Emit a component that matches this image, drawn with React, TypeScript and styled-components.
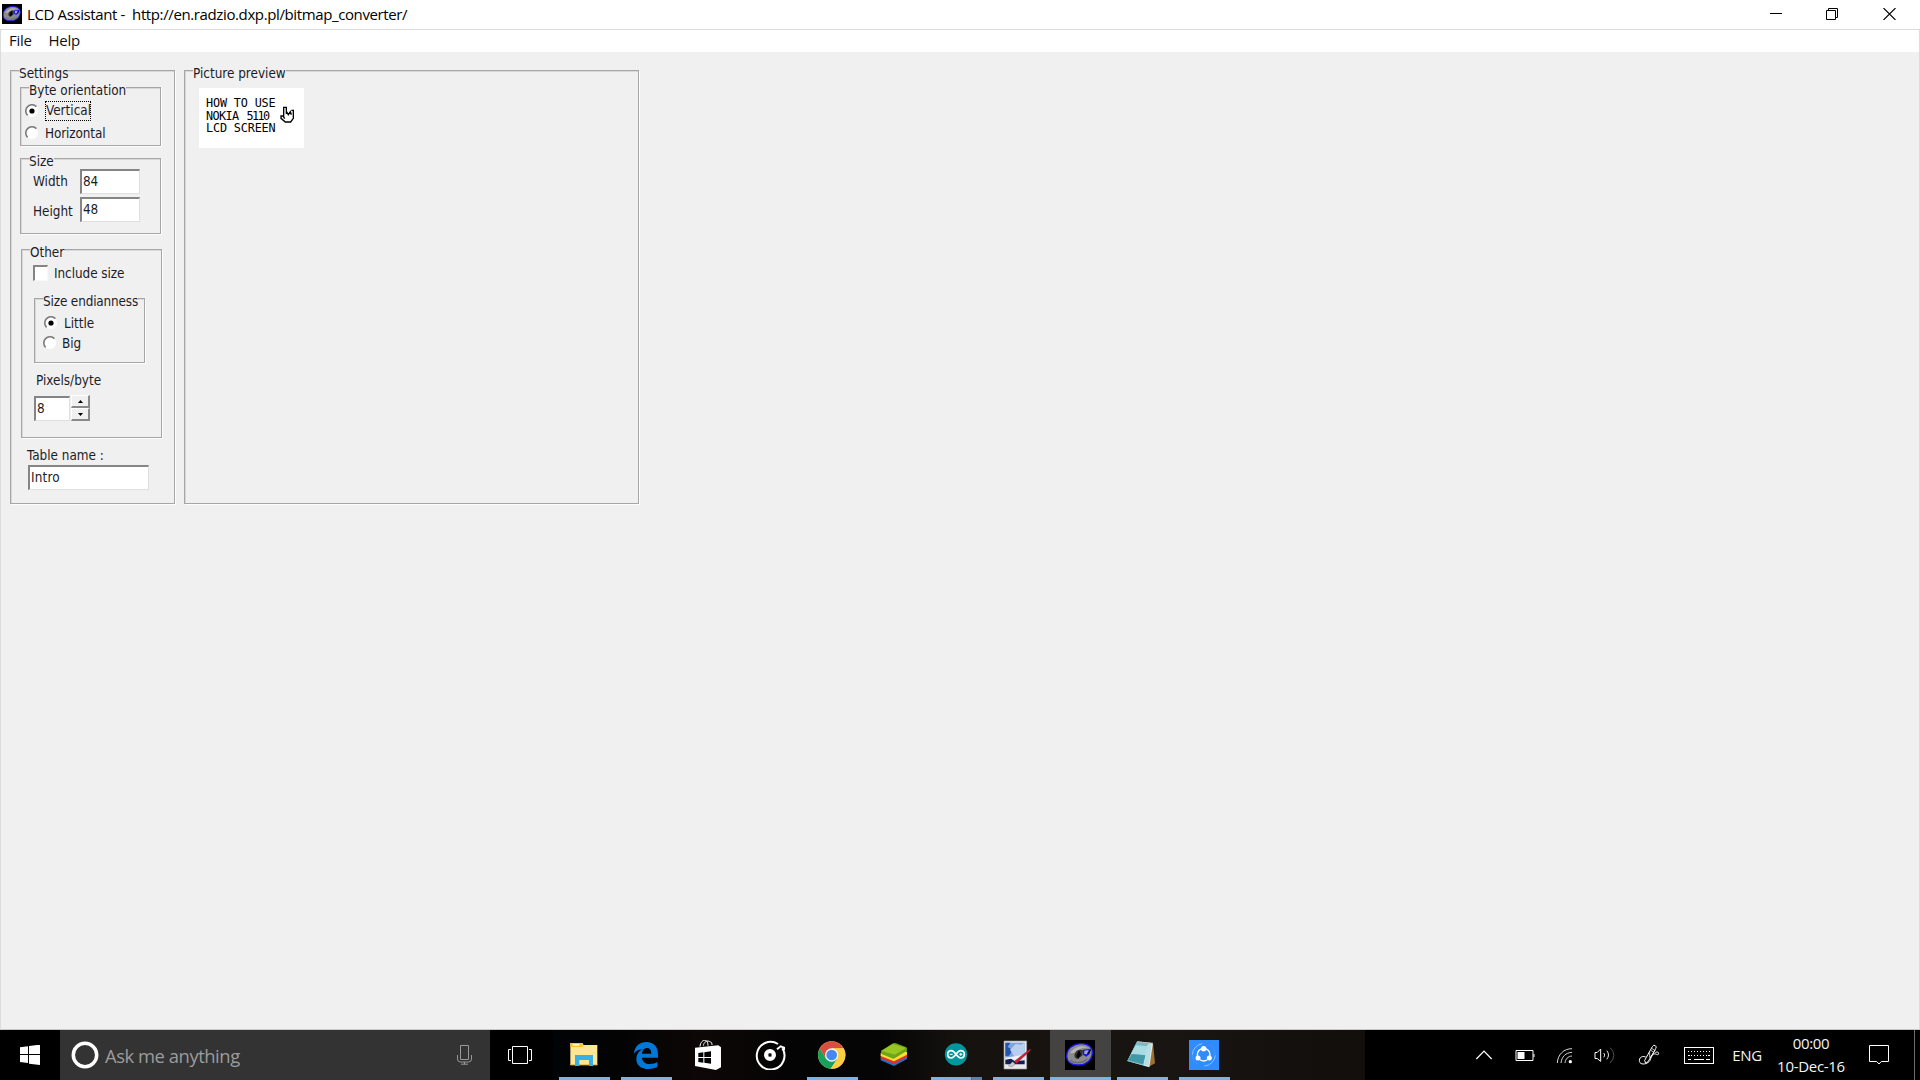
import React from "react";
import styled, { createGlobalStyle, css } from "styled-components";

const Global = createGlobalStyle`
  *, *::before, *::after { box-sizing: border-box; }
  body { margin: 0; background: #f0f0f0; overflow: hidden; }
`;

const dialogFont = `"DejaVu Sans Condensed", "DejaVu Sans", sans-serif`;
const shellFont = `"Open Sans", "Noto Sans", sans-serif`;

type Offset = { $top?: number; $left?: number };
const offset = css<Offset>`
  margin-top: ${(p) => p.$top ?? 0}px;
  margin-left: ${(p) => p.$left ?? 0}px;
`;

const Screen = styled.div`
  width: 1920px;
  height: 1080px;
  display: flex;
  flex-direction: column;
  background: #f0f0f0;
`;

/* ---------- window chrome ---------- */

const TitleBar = styled.header`
  height: 29px;
  flex: none;
  display: flex;
  align-items: center;
  background: #fff;
  padding: 0 1px 1px 2px;
`;

const Title = styled.span`
  flex: 1;
  margin-left: 5px;
  font: 15px/28px ${shellFont};
  letter-spacing: -0.38px;
  white-space: pre;
  color: #000;
`;

const CaptionButton = styled.button<{ $width: number }>`
  width: ${(p) => p.$width}px;
  height: 28px;
  padding: 0;
  border: 0;
  background: none;
  display: flex;
  justify-content: center;
  align-items: center;
`;

const WindowBody = styled.main`
  flex: 1;
  display: flex;
  flex-direction: column;
  border: 1px solid #dcdcdc;
  border-bottom-color: #c8c8c8;
`;

const MenuBar = styled.nav`
  height: 22px;
  flex: none;
  display: flex;
  gap: 17px;
  padding-left: 8px;
  background: #fff;
`;

const MenuItem = styled.span<{ $spacing: number }>`
  font: 15px/21px ${shellFont};
  letter-spacing: ${(p) => p.$spacing}px;
  color: #111;
`;

const Panels = styled.div`
  display: flex;
  gap: 9px;
  padding: 18px 0 0 9px;
`;

/* ---------- form parts ---------- */

const Group = styled.section<Offset & { $width: number; $height: number }>`
  ${offset}
  width: ${(p) => p.$width}px;
  height: ${(p) => p.$height}px;
  display: flex;
  flex-direction: column;
  align-items: flex-start;
  border: 1px solid #a6a6a6;
  box-shadow: 1px 1px 0 #fdfdfd, inset 1px 1px 0 #d8d8d8;
`;

const Legend = styled.span<{ $spacing?: number; $left?: number }>`
  height: 16px;
  margin: -5px 0 -11px ${(p) => p.$left ?? 8}px;
  font: 13.4px/16px ${dialogFont};
  letter-spacing: ${(p) => p.$spacing ?? 0}px;
  white-space: nowrap;
  color: #1c1c28;
  background: #f0f0f0;
`;

const Label = styled.span<Offset & { $spacing?: number; $width?: number }>`
  ${offset}
  ${(p) => p.$width && `width: ${p.$width}px;`}
  flex: none;
  padding-top: 1px;
  font: 13.4px/18px ${dialogFont};
  letter-spacing: ${(p) => p.$spacing ?? 0}px;
  white-space: nowrap;
  color: #1c1c28;
`;

const FocusLabel = styled(Label)`
  border: 1px dotted #000;
  line-height: 18px;
  height: 20px;
  padding: 0 1px 0 0;
  width: 46px;
`;

const Row = styled.div<Offset & { $height: number }>`
  ${offset}
  height: ${(p) => p.$height}px;
  display: flex;
  align-items: center;
`;

const TextBox = styled.input<Offset & { $width: number; $spacing?: number }>`
  ${offset}
  width: ${(p) => p.$width}px;
  height: 25px;
  flex: none;
  padding: 0 0 1px 1px;
  border: solid;
  border-width: 2px 1px 1px 2px;
  border-color: #858585 #dfdfdf #dfdfdf #858585;
  outline: none;
  background: #fff;
  font: 13.4px ${dialogFont};
  letter-spacing: ${(p) => p.$spacing ?? -0.2}px;
  color: #1c1c28;
`;

const CheckBox = styled.span`
  width: 15px;
  height: 16px;
  border: solid;
  border-width: 2px 1px 1px 2px;
  border-color: #858585 #f8f8f8 #f8f8f8 #858585;
  background: #fff;
`;

const Spinner = styled.div`
  width: 19px;
  margin-left: 1px;
  display: grid;
  grid-template-rows: 13px 13px;
`;

const SpinButton = styled.button`
  padding: 0;
  display: flex;
  align-items: center;
  justify-content: center;
  border: solid;
  border-width: 1px 2px 2px 1px;
  border-color: #fff #8a8a8a #8a8a8a #fff;
  background: #f0f0f0;
`;

const Radio = ({ checked }: { checked?: boolean }) => (
  <svg width="14" height="14" viewBox="0 0 14 14">
    <circle cx="7" cy="7" r="6" fill="#fff" />
    <path d="M2.6 11.4A6.1 6.1 0 0 1 11.4 2.6" fill="none" stroke="#7c7c7c" strokeWidth="1.6" />
    {checked && <circle cx="7" cy="7" r="2.6" fill="#000" />}
  </svg>
);

/* ---------- picture preview ---------- */

const Bitmap = styled.div`
  width: 105px;
  height: 60px;
  margin: 17px 0 0 14px;
  padding: 9px 0 0 7px;
  display: flex;
  gap: 5px;
  background: #fff;
`;

const BitmapText = styled.div`
  width: 69px;
  font: 11.8px/12.5px "DejaVu Sans Mono", monospace;
  letter-spacing: -0.15px;
  white-space: pre;
  color: #000;
`;

const Tight = styled.span<{ $spacing: number; $left?: number }>`
  letter-spacing: ${(p) => p.$spacing}px;
  margin-left: ${(p) => p.$left ?? 0}px;
`;

/* ---------- taskbar ---------- */

const Taskbar = styled.footer`
  height: 50px;
  flex: none;
  display: flex;
  background: #000;
`;

const StartButton = styled.div`
  width: 60px;
  flex: none;
  display: flex;
  align-items: center;
  justify-content: center;
`;

const Search = styled.div`
  width: 430px;
  flex: none;
  display: flex;
  align-items: center;
  padding: 0 18px 0 11px;
  background: #333;
`;

const SearchText = styled.span`
  flex: 1;
  margin-left: 6px;
  padding-top: 1px;
  font: 18.4px/24px ${shellFont};
  letter-spacing: -0.45px;
  color: #9c9c9c;
`;

const TaskView = styled.div`
  width: 63px;
  flex: none;
  padding-left: 18px;
  display: flex;
  align-items: center;
`;

const Apps = styled.div`
  width: 812px;
  flex: none;
  display: flex;
  background: linear-gradient(90deg, #020305 0, #030304 60px, #0d0706 150px, #040404 240px, #060505 330px, #14110f 400px, #191512 620px, #14100e 740px, #110e0c 100%);
`;

const AppCell = styled.div<{ $active?: boolean }>`
  width: 62px;
  height: 50px;
  padding-top: 10px;
  display: grid;
  grid-template-rows: 30px 7px 3px;
  justify-items: center;
  ${(p) => p.$active && "background: linear-gradient(90deg, transparent 1px, #454341 1px);"}
`;

const Indicator = styled.div<{ $active?: boolean; $stacked?: boolean }>`
  grid-row: 3;
  width: ${(p) => (p.$active ? 61 : 51)}px;
  background: ${(p) => (p.$stacked ? "linear-gradient(90deg, #76b4ec 40px, #39597a 40px, #5584b0 41px)" : "#76b4ec")};
`;

const Tray = styled.div`
  flex: 1;
  display: flex;
  justify-content: flex-end;
`;

const TrayCell = styled.div<{ $width: number }>`
  width: ${(p) => p.$width}px;
  display: flex;
  flex-direction: column;
  align-items: center;
  justify-content: center;
  font: 15px/23px ${shellFont};
  letter-spacing: -0.3px;
  white-space: nowrap;
  color: #f4f4f4;
`;

const ShowDesktop = styled.div`
  width: 6px;
  margin-left: 8px;
  border-left: 1px solid #6b6b6b;
`;

/* Icons are drawn on a grid three times finer than the screen pixels. */
const Icon = ({ x, children }: { x: number; children: React.ReactNode }) => (
  <svg width="32" height="30" viewBox={`${x} 60 96 90`} fill="none">
    {children}
  </svg>
);

const LcdLogo = ({ size }: { size: number }) => (
  <svg width={size} height={size} viewBox="0 0 90 90">
    <rect width="90" height="90" fill="#000" />
    <path d="M5 49C5 22 30 10 50 11C72 12 84 24 82 40C80 61 62 76 38 75C18 75 6 68 5 49Z" fill="#8b8b8d" stroke="#1717ee" strokeWidth="4" />
    <path d="M15 40C28 18 54 14 69 24C51 22 41 27 34 38Z" fill="#b5b5b5" />
    <path d="M29 42C32 30 45 26 54 31L52 47L36 57C29 54 27 49 29 42Z" fill="#333335" />
    <path d="M42 31L48 43L40 57L34 48Z" fill="#050505" />
    <path d="M54 29L78 26L74 42L64 50L54 44Z" fill="#1414e6" />
    <path d="M58 32L71 30L65 43L58 42Z" fill="#a4a4c9" />
    <path d="M69 41L77 30" stroke="#000" strokeWidth="3" />
    <path d="M15 61C30 72 53 70 67 57" fill="none" stroke="#6b6b6e" strokeWidth="4" />
  </svg>
);

const apps: { name: string; running?: boolean; active?: boolean; stacked?: boolean; icon: React.ReactNode }[] = [
  {
    name: "File Explorer",
    running: true,
    icon: (
      <Icon x={84}>
        <path d="M91 69h36l4 6h41v60H91z" fill="#ffe596" />
        <path d="M91 69h36l4 8-5 4H91z" fill="#fdc52c" />
        <path d="M98 72h20v5H98z" fill="#fff4cc" />
        <path d="M91 132h81v4H91z" fill="#e9c25c" />
        <path d="M105 105h54v33h-12v-18h-29v18h-13z" fill="#35b1e5" />
      </Icon>
    ),
  },
  {
    name: "Edge",
    running: true,
    icon: (
      <Icon x={270}>
        <path
          d="M281 102C284 79 299 66 319 66C342 66 354 82 354 103V113H306C307 126 317 132 330 132C339 132 347 129 352 126V141C344 145 335 147 325 147C302 147 289 134 289 116C289 104 296 94 306 88C294 89 286 94 281 102ZM306 101H334C334 90 329 84 321 84C312 84 307 91 306 101Z"
          fill="#0078d7"
          fillRule="evenodd"
        />
      </Icon>
    ),
  },
  {
    name: "Store",
    icon: (
      <Icon x={456}>
        <path d="M465 83L535 76L543 82V142L528 150L465 138Z" fill="#fff" />
        <path d="M480 80C481 66 489 60 496 61C502 62 504 69 504 77M490 77C492 66 500 61 508 64C515 66 516 70 516 75" stroke="#fff" strokeWidth="3" />
        <path d="M475 99L490 97V111H475ZM493 97L513 94V111H493ZM475 114H490V128L475 126ZM493 114H513V131L493 128Z" fill="#000" />
      </Icon>
    ),
  },
  {
    name: "Groove Music",
    icon: (
      <Icon x={642}>
        <path d="M714 72A41.500 41.500 0 1 0 727 85" stroke="#fff" strokeWidth="6" />
        <circle cx="690" cy="105" r="12" stroke="#fff" strokeWidth="12" />
        <circle cx="690" cy="105" r="6" fill="#fff" />
        <circle cx="690" cy="105" r="5" fill="#080606" />
        <path d="M711 88L722 79L732 83V91" stroke="#fff" strokeWidth="6" />
      </Icon>
    ),
  },
  {
    name: "Chrome",
    running: true,
    icon: (
      <Icon x={828}>
        <circle cx="875" cy="105" r="41" fill="#ffd04c" />
        <path d="M839.500 84.500A41 41 0 0 1 910.500 84.500H875L857 115Z" fill="#dc4c3f" />
        <path d="M839.500 84.500A41 41 0 0 0 872 146L893 115L875 124L857 115Z" fill="#18a05e" />
        <path d="M875 85H911A41 41 0 0 1 872 146L893 115Z" fill="#ffcd42" />
        <circle cx="875" cy="105" r="20" fill="#f4f4f4" />
        <circle cx="875" cy="105" r="16" fill="#4688f1" />
      </Icon>
    ),
  },
  {
    name: "BlueStacks",
    icon: (
      <Icon x={-6}>
        <path d="M2 112L42 92L81 108V117L42 138L2 121Z" fill="#1976c8" />
        <path d="M2 106L42 88L81 102V111L42 132L2 115Z" fill="#e32d31" />
        <path d="M2 99L42 81L81 95V104L42 124L2 108Z" fill="#ffdf2c" />
        <path d="M3 92L37 71Q42 68 48 70L79 82Q82 85 81 92L44 115Q40 117 36 115L4 102Z" fill="#6ba51b" />
        <path d="M5 93L38 72L78 84L44 104Z" fill="#99c620" />
      </Icon>
    ),
  },
  {
    name: "Arduino",
    running: true,
    stacked: true,
    icon: (
      <Icon x={180}>
        <circle cx="228" cy="103" r="33.500" fill="#00979c" />
        <path
          d="M228 103C223 96 219 92 214 92C207 92 203 97 203 103C203 109 207 114 214 114C219 114 223 110 228 103C233 96 237 92 242 92C249 92 253 97 253 103C253 109 249 114 242 114C237 114 233 110 228 103Z"
          stroke="#fff"
          strokeWidth="5"
        />
        <path d="M209 103h9M238 103h9M242.500 98.500v9" stroke="#fff" strokeWidth="3" />
      </Icon>
    ),
  },
  {
    name: "Paint",
    running: true,
    icon: (
      <Icon x={366}>
        <path d="M372 63H440V147H372Z" fill="#e9e9ee" stroke="#999" strokeWidth="2" />
        <path d="M376 68H434V118H376Z" fill="#7ea4dc" />
        <path d="M376 68H391L383 81L399 90L387 107L376 108Z" fill="#2355ac" />
        <path d="M390 89L407 72L422 74L434 68V109L406 114Z" fill="#b9cff0" />
        <path d="M376 113L434 104V119H376Z" fill="#eff4ff" />
        <path d="M376 119L393 116L405 124L434 121V133H376Z" fill="#101f51" />
        <path d="M385 137L398 125L405 131C401 140 394 143 385 137Z" fill="#c9c9cb" stroke="#5c5354" />
        <path d="M403 124L450 87L453 90L409 131Z" fill="#c62332" stroke="#7f101b" />
      </Icon>
    ),
  },
  { name: "LCD Assistant", running: true, active: true, icon: <LcdLogo size={30} /> },
  {
    name: "Notepad",
    running: true,
    icon: (
      <Icon x={738}>
        <path d="M771 65L819 69L825 130L805 141Z" fill="#9e7131" />
        <path d="M772 64L819 69L808 142L742 123Z" fill="#d9eff1" />
        <path d="M770 66L806 70L790 136L742 123Z" fill="#79bcc7" />
        <path d="M767 76L804 79L798 106L753 102Z" fill="#a9dce2" />
        <path d="M756 102L797 106L789 133L744 121Z" fill="#429aa8" />
        <path d="M802 74L815 74L806 137L791 134Z" fill="#b7dfe3" />
        <path d="M771 67L819 71" stroke="#a4a8a6" strokeWidth="5" strokeDasharray="3 2" />
      </Icon>
    ),
  },
  {
    name: "SHAREit",
    running: true,
    icon: (
      <Icon x={924}>
        <rect x="927" y="60" width="90" height="90" fill="#2f8cff" />
        <circle cx="971" cy="104" r="19" stroke="#fff" strokeWidth="4" />
        <circle cx="971" cy="86" r="8" fill="#fff" />
        <circle cx="954" cy="114" r="7.500" fill="#fff" />
        <circle cx="988" cy="114" r="7.500" fill="#fff" />
        <path d="M937 104A35 35 0 0 1 967 71M1006 106A35 35 0 0 1 973 138" stroke="#91c2ff" strokeWidth="3" />
        <path d="M937 104C937 117 944 128 954 134M988 73C999 79 1006 91 1006 106" stroke="#4a9aff" strokeWidth="2" />
      </Icon>
    ),
  },
];

const Chevron = () => (
  <Icon x={84}>
    <path d="M109 117L132 93L155 117" stroke="#fff" strokeWidth="3.600" />
  </Icon>
);

const Battery = () => (
  <Icon x={205.5}>
    <path d="M226.500 91.500H277.500V121.500H226.500Z" stroke="#fff" strokeWidth="3" />
    <path d="M231 96H252V117H231ZM279 102H282V111H279Z" fill="#fff" />
  </Icon>
);

const Wifi = () => (
  <Icon x={327}>
    <path d="M352 129C353 104 371 86 396 86M363 129C365 110 377 98 396 97M375 129C376 117 384 109 396 108" stroke="#d6d6d6" strokeWidth="3" />
    <circle cx="391" cy="125" r="5" fill="#fff" />
  </Icon>
);

const Volume = () => (
  <Icon x={445.5}>
    <path d="M463.500 97.500H470L480.500 87V124L470 115.500H463.500Z" stroke="#fff" strokeWidth="3" />
    <path d="M490 99Q495 105 490 112M499 92Q509 105 499 118" stroke="#e6e6e6" strokeWidth="3" />
    <path d="M509 83Q531 105 509 129" stroke="#4d4d4d" strokeWidth="3" />
  </Icon>
);

const Pen = () => (
  <Icon x={579}>
    <path d="M617 130L614 121L637 80Q641 73 646 77Q651 80 647 86L625 124Z" stroke="#fff" strokeWidth="3" />
    <path d="M635 85L644 91M632 91L641 96M629 96V113M646 90L633 113" stroke="#e8e8e8" strokeWidth="2.500" />
    <path d="M617 111C602 105 594 119 600 128C606 135 620 132 627 125C636 117 629 108 639 103C647 98 654 109 656 101C657 97 652 94 646 98" stroke="#fff" strokeWidth="3" />
  </Icon>
);

const Keyboard = () => (
  <Icon x={729}>
    <rect x="733.500" y="82.500" width="87" height="48" stroke="#fff" strokeWidth="3" />
    <path d="M744 94.500H813M753 106.500H807" stroke="#fff" strokeWidth="3" strokeDasharray="3 6" />
    <path d="M744 106.500H750M804 106.500H810M744 118.500H753M762 118.500H792M798 118.500H810" stroke="#fff" strokeWidth="3" />
  </Icon>
);

const Notifications = () => (
  <Icon x={1269}>
    <path d="M1288.500 76.500H1345.500V124.500H1324L1317 132L1310 124.500H1288.500Z" stroke="#fff" strokeWidth="3" />
  </Icon>
);

export default function App() {
  return (
    <Screen>
      <Global />
      <TitleBar>
        <LcdLogo size={20} />
        <Title>LCD Assistant -  http://en.radzio.dxp.pl/bitmap_converter/</Title>
        <CaptionButton $width={56} aria-label="Minimize">
          <svg width="12" height="12" viewBox="0 0 12 12"><path d="M0 5.500H12" stroke="#000" /></svg>
        </CaptionButton>
        <CaptionButton $width={56} aria-label="Restore">
          <svg width="12" height="12" viewBox="0 0 12 12" fill="none" stroke="#000">
            <path d="M.5 2.500H9.500V11.500H.5ZM2.500 2.500V.5H11.500V9.500H9.500" />
          </svg>
        </CaptionButton>
        <CaptionButton $width={59} aria-label="Close">
          <svg width="13" height="12" viewBox="0 0 13 12"><path d="M.5 0L12.500 12M12.500 0L.5 12" stroke="#000" strokeWidth="1.100" /></svg>
        </CaptionButton>
      </TitleBar>

      <WindowBody>
        <MenuBar>
          <MenuItem $spacing={-0.3}>File</MenuItem>
          <MenuItem $spacing={-0.3}>Help</MenuItem>
        </MenuBar>
        <Panels>
          <Group $width={165} $height={434}>
            <Legend>Settings</Legend>

            <Group $width={141} $height={59} $top={16} $left={9}>
              <Legend>Byte orientation</Legend>
              <Row $height={22} $top={12} $left={4}>
                <Radio checked />
                <FocusLabel $left={6}>Vertical</FocusLabel>
              </Row>
              <Row $height={22} $left={4}>
                <Radio />
                <Label $left={6} $spacing={-0.1}>Horizontal</Label>
              </Row>
            </Group>

            <Group $width={141} $height={76} $top={12} $left={9}>
              <Legend>Size</Legend>
              <Row $height={25} $top={10} $left={12}>
                <Label $width={47}>Width</Label>
                <TextBox $width={60} defaultValue="84" />
              </Row>
              <Row $height={25} $top={3} $left={12}>
                <Label $width={47} $top={4}>Height</Label>
                <TextBox $width={60} defaultValue="48" />
              </Row>
            </Group>

            <Group $width={141} $height={189} $top={15} $left={10}>
              <Legend>Other</Legend>
              <Row $height={18} $top={14} $left={11}>
                <CheckBox />
                <Label $left={6} $spacing={-0.05}>Include size</Label>
              </Row>
              <Group $width={111} $height={65} $top={16} $left={12}>
                <Legend $spacing={-0.14}>Size endianness</Legend>
                <Row $height={20} $top={14} $left={9}>
                  <Radio checked />
                  <Label $left={6}>Little</Label>
                </Row>
                <Row $height={20} $left={8}>
                  <Radio />
                  <Label $left={5}>Big</Label>
                </Row>
              </Group>
              <Label $top={8} $left={14}>Pixels/byte</Label>
              <Row $height={26} $top={5} $left={12}>
                <TextBox $width={36} defaultValue="8" />
                <Spinner>
                  <SpinButton aria-label="Up">
                    <svg width="5" height="3"><path d="M0 3L2.500 0L5 3Z" fill="#000" /></svg>
                  </SpinButton>
                  <SpinButton aria-label="Down">
                    <svg width="5" height="3"><path d="M0 0L2.500 3L5 0Z" fill="#000" /></svg>
                  </SpinButton>
                </Spinner>
              </Row>
            </Group>

            <Label $top={8} $left={16}>Table name :</Label>
            <TextBox $width={121} $left={17} $spacing={0.2} defaultValue="Intro" />
          </Group>

          <Group $width={455} $height={434}>
            <Legend>Picture preview</Legend>
            <Bitmap>
              <BitmapText>
                <div>HOW TO USE</div>
                <div><Tight $spacing={-0.6}>NOKIA</Tight><Tight $spacing={-1.6} $left={8}>5110</Tight></div>
                <div>LCD SCREEN</div>
              </BitmapText>
              <Row $height={18} $top={9}>
                <svg width="15" height="18" viewBox="300 138 45 54" fill="none" stroke="#000" strokeWidth="4">
                  <path d="M311 172V142H319V162M319 154L325 164L331 155L334 164M334 151H340V175L332 186H316L303 175V168H309L314 176" />
                </svg>
              </Row>
            </Bitmap>
          </Group>
        </Panels>
      </WindowBody>

      <Taskbar>
        <StartButton>
          <svg width="20" height="20" viewBox="60 45 60 60">
            <path d="M60 52L84 49V72H60ZM87 48L120 44V72H87ZM60 75H84V99L60 96ZM87 75H120V105L87 101Z" fill="#fff" />
          </svg>
        </StartButton>
        <Search>
          <svg width="28" height="28" viewBox="0 0 28 28" fill="none">
            <circle cx="14" cy="14" r="11.700" stroke="#fff" strokeWidth="3.500" />
          </svg>
          <SearchText>Ask me anything</SearchText>
          <svg width="15" height="20" viewBox="51 45 45 60" fill="none" stroke="#999" strokeWidth="3">
            <path d="M61.500 46.500H85.500V88.500H61.500ZM52.500 75V87Q53 96 61 96H86Q94 96 94.500 87V75M73.500 96V103M63 102.500H84" />
          </svg>
        </Search>
        <TaskView>
          <svg width="24" height="18" viewBox="204 48 72 54" fill="none" stroke="#fff" strokeWidth="3">
            <path d="M217.500 49.500H262.500V100.500H217.500ZM213 58.500H205.500V91.500H213M267 58.500H274.500V91.500H267" />
          </svg>
        </TaskView>
        <Apps>
          {apps.map((app) => (
            <AppCell key={app.name} $active={app.active}>
              {app.icon}
              {app.running && <Indicator $active={app.active} $stacked={app.stacked} />}
            </AppCell>
          ))}
        </Apps>
        <Tray>
          <TrayCell $width={40}><Chevron /></TrayCell>
          <TrayCell $width={41}><Battery /></TrayCell>
          <TrayCell $width={40}><Wifi /></TrayCell>
          <TrayCell $width={39}><Volume /></TrayCell>
          <TrayCell $width={50}><Pen /></TrayCell>
          <TrayCell $width={50}><Keyboard /></TrayCell>
          <TrayCell $width={46}>ENG</TrayCell>
          <TrayCell $width={82}>
            <span>00:00</span>
            <span>10-Dec-16</span>
          </TrayCell>
          <TrayCell $width={54}><Notifications /></TrayCell>
          <ShowDesktop />
        </Tray>
      </Taskbar>
    </Screen>
  );
}
